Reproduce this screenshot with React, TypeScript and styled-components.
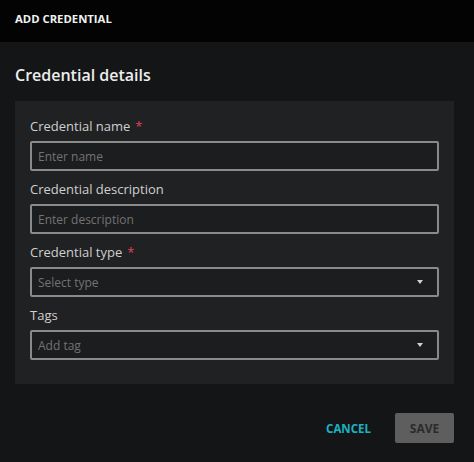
import React from 'react';
import styled, { createGlobalStyle } from 'styled-components';

const GlobalStyle = createGlobalStyle`
  html, body {
    margin: 0;
    padding: 0;
    background: #141517;
  }
  body {
    font-family: 'Open Sans', 'Noto Sans', sans-serif;
  }
`;

const Dialog = styled.div`
  width: 474px;
  height: 462px;
  background: #141517;
  display: flex;
  flex-direction: column;
`;

const Header = styled.div`
  height: 42px;
  background: #030303;
  display: flex;
  align-items: center;
  padding: 0 15px;
  padding-bottom: 6px;
  box-sizing: border-box;
`;

const HeaderTitle = styled.h1`
  margin: 0;
  font-size: 11.3px;
  font-weight: 700;
  color: #f2f2f2;
`;

const Body = styled.div`
  padding: 0 20px 0 15px;
  display: flex;
  flex-direction: column;
`;

const SectionTitle = styled.h2`
  margin: 21px 0 0;
  height: 38px;
  font-size: 16px;
  font-weight: 600;
  color: #ededed;
  line-height: 24px;
`;

const Panel = styled.div`
  background: #202123;
  padding: 16px 15px 24px;
  display: flex;
  flex-direction: column;
`;

const Field = styled.div`
  display: flex;
  flex-direction: column;
  & + & {
    margin-top: 9px;
  }
`;

const Label = styled.label`
  font-size: 13px;
  color: #cfcfcf;
  line-height: 18px;
  height: 18px;
  margin-bottom: 6px;
`;

const Required = styled.span`
  color: #e2405a;
  margin-left: 5px;
`;

const InputBox = styled.div`
  height: 30px;
  box-sizing: border-box;
  border: 2px solid #8a8a8a;
  border-radius: 2px;
  background: #1c1d1f;
  display: flex;
  align-items: center;
  padding: 0 14px 0 6px;
`;

const Placeholder = styled.span`
  flex: 1;
  font-size: 12px;
  color: #737373;
`;

const Caret = styled.span`
  width: 0;
  height: 0;
  border-left: 3.5px solid transparent;
  border-right: 3.5px solid transparent;
  border-top: 4px solid #d0d0d0;
`;

const Footer = styled.div`
  display: flex;
  justify-content: flex-end;
  align-items: center;
  gap: 22px;
  padding: 29px 20px 0 0;
`;

const CancelButton = styled.button`
  background: none;
  border: none;
  padding: 0 2px;
  font-family: inherit;
  font-size: 11.5px;
  font-weight: 700;
  color: #1ab3c2;
  cursor: pointer;
`;

const SaveButton = styled.button`
  width: 59px;
  height: 30px;
  background: #5e5e5f;
  border: none;
  border-radius: 2px;
  font-family: inherit;
  font-size: 12px;
  font-weight: 700;
  color: #2b2b2c;
`;

const fields = [
  { label: 'Credential name', placeholder: 'Enter name', required: true, select: false },
  { label: 'Credential description', placeholder: 'Enter description', required: false, select: false },
  { label: 'Credential type', placeholder: 'Select type', required: true, select: true },
  { label: 'Tags', placeholder: 'Add tag', required: false, select: true },
];

const App = () => {
  return (
    <Dialog>
      <GlobalStyle />
      <Header>
        <HeaderTitle>ADD CREDENTIAL</HeaderTitle>
      </Header>
      <Body>
        <SectionTitle>Credential details</SectionTitle>
        <Panel>
          {fields.map(f => (
            <Field key={f.label}>
              <Label>
                {f.label}
                {f.required && <Required>*</Required>}
              </Label>
              <InputBox>
                <Placeholder>{f.placeholder}</Placeholder>
                {f.select && <Caret />}
              </InputBox>
            </Field>
          ))}
        </Panel>
      </Body>
      <Footer>
        <CancelButton>CANCEL</CancelButton>
        <SaveButton>SAVE</SaveButton>
      </Footer>
    </Dialog>
  );
};

export default App;
